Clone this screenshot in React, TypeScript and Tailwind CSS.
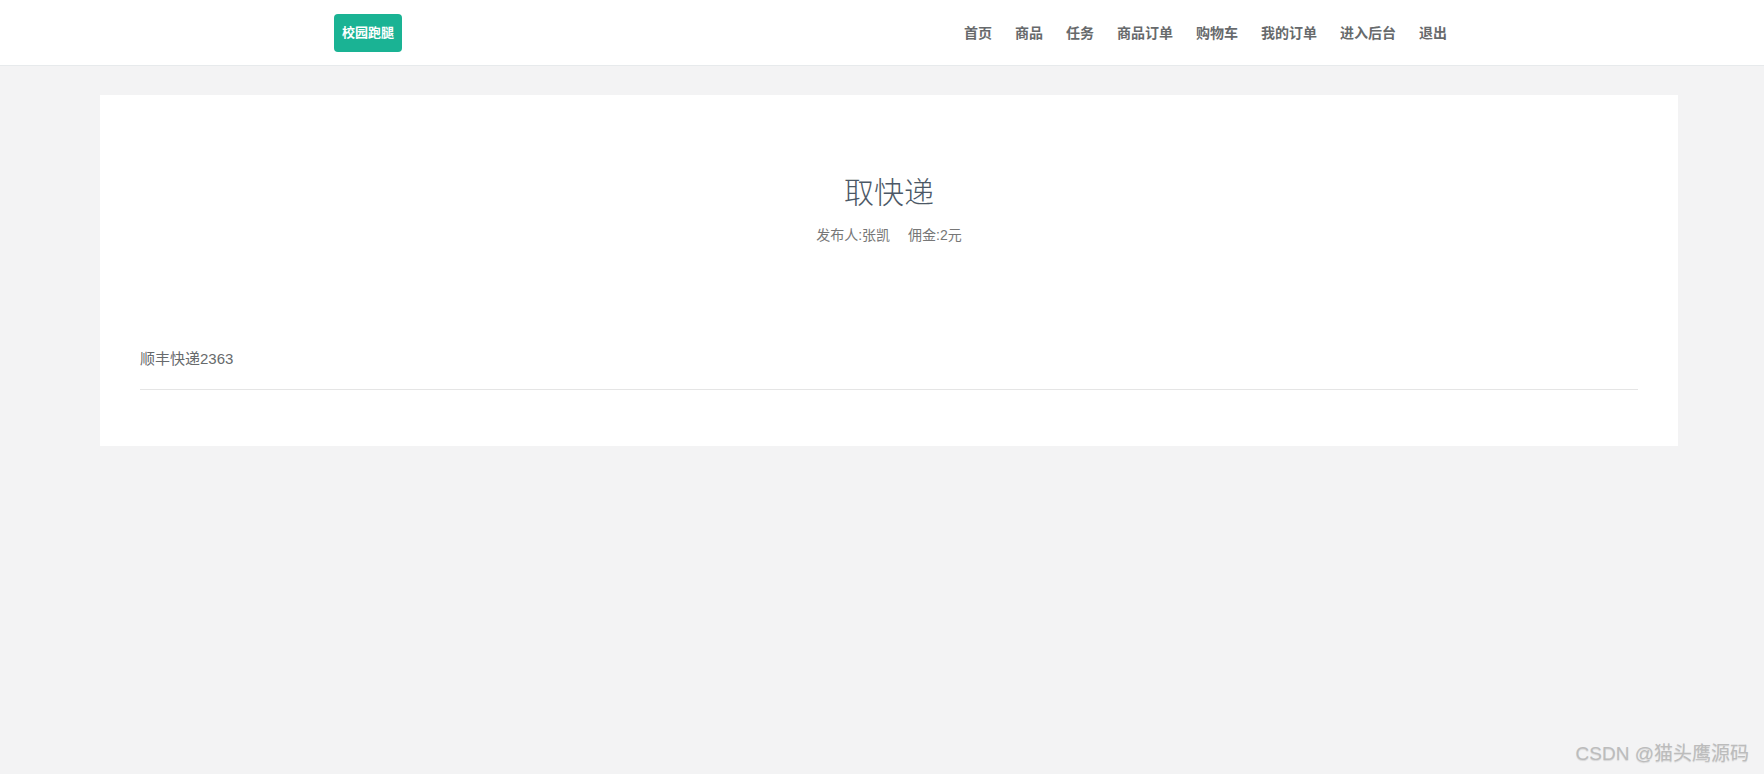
const navItems = ["首页", "商品", "任务", "商品订单", "购物车", "我的订单", "进入后台", "退出"]

const font = { fontFamily: '"Liberation Sans", "Noto Sans CJK SC", sans-serif' }

function Header() {
  return (
    <header className="flex h-[66px] items-center justify-between border-b border-[#e7eaec] bg-white pl-[334px] pr-[317px]">
      <a className="flex h-[38px] w-[68px] items-center justify-center rounded-[4px] bg-[#1ab394] text-[13px] font-bold text-white">
        校园跑腿
      </a>
      <nav className="flex items-center gap-[23px]">
        {navItems.map((item) => (
          <a key={item} className="text-[14px] font-bold leading-5 text-[#676a6c]">
            {item}
          </a>
        ))}
      </nav>
    </header>
  )
}

export default function App() {
  return (
    <div className="relative min-h-[774px] bg-[#f3f3f4]" style={font}>
      <Header />
      <main className="ml-[100px] mr-[86px] mt-[29px] bg-white px-[40px] pb-[56px] pt-[80px]">
        <div className="text-center">
          <h1 className="text-[30px] font-light leading-9 text-[#4c5866]">取快递</h1>
          <p className="mt-[14px] text-[14px] leading-5 text-[#777]">
            <span>发布人:张凯</span>
            <span className="ml-[18px]">佣金:2元</span>
          </p>
        </div>
        <div className="mt-[104px] border-b border-[#e5e5e5] pb-[20px] text-[15px] leading-5 text-[#676a6c]">
          顺丰快递2363
        </div>
      </main>
      <div className="absolute bottom-[6px] right-[15px] text-[19px] text-[#bcbcbc] [text-shadow:0_1px_1px_rgba(0,0,0,0.12)]">
        CSDN @猫头鹰源码
      </div>
    </div>
  )
}
